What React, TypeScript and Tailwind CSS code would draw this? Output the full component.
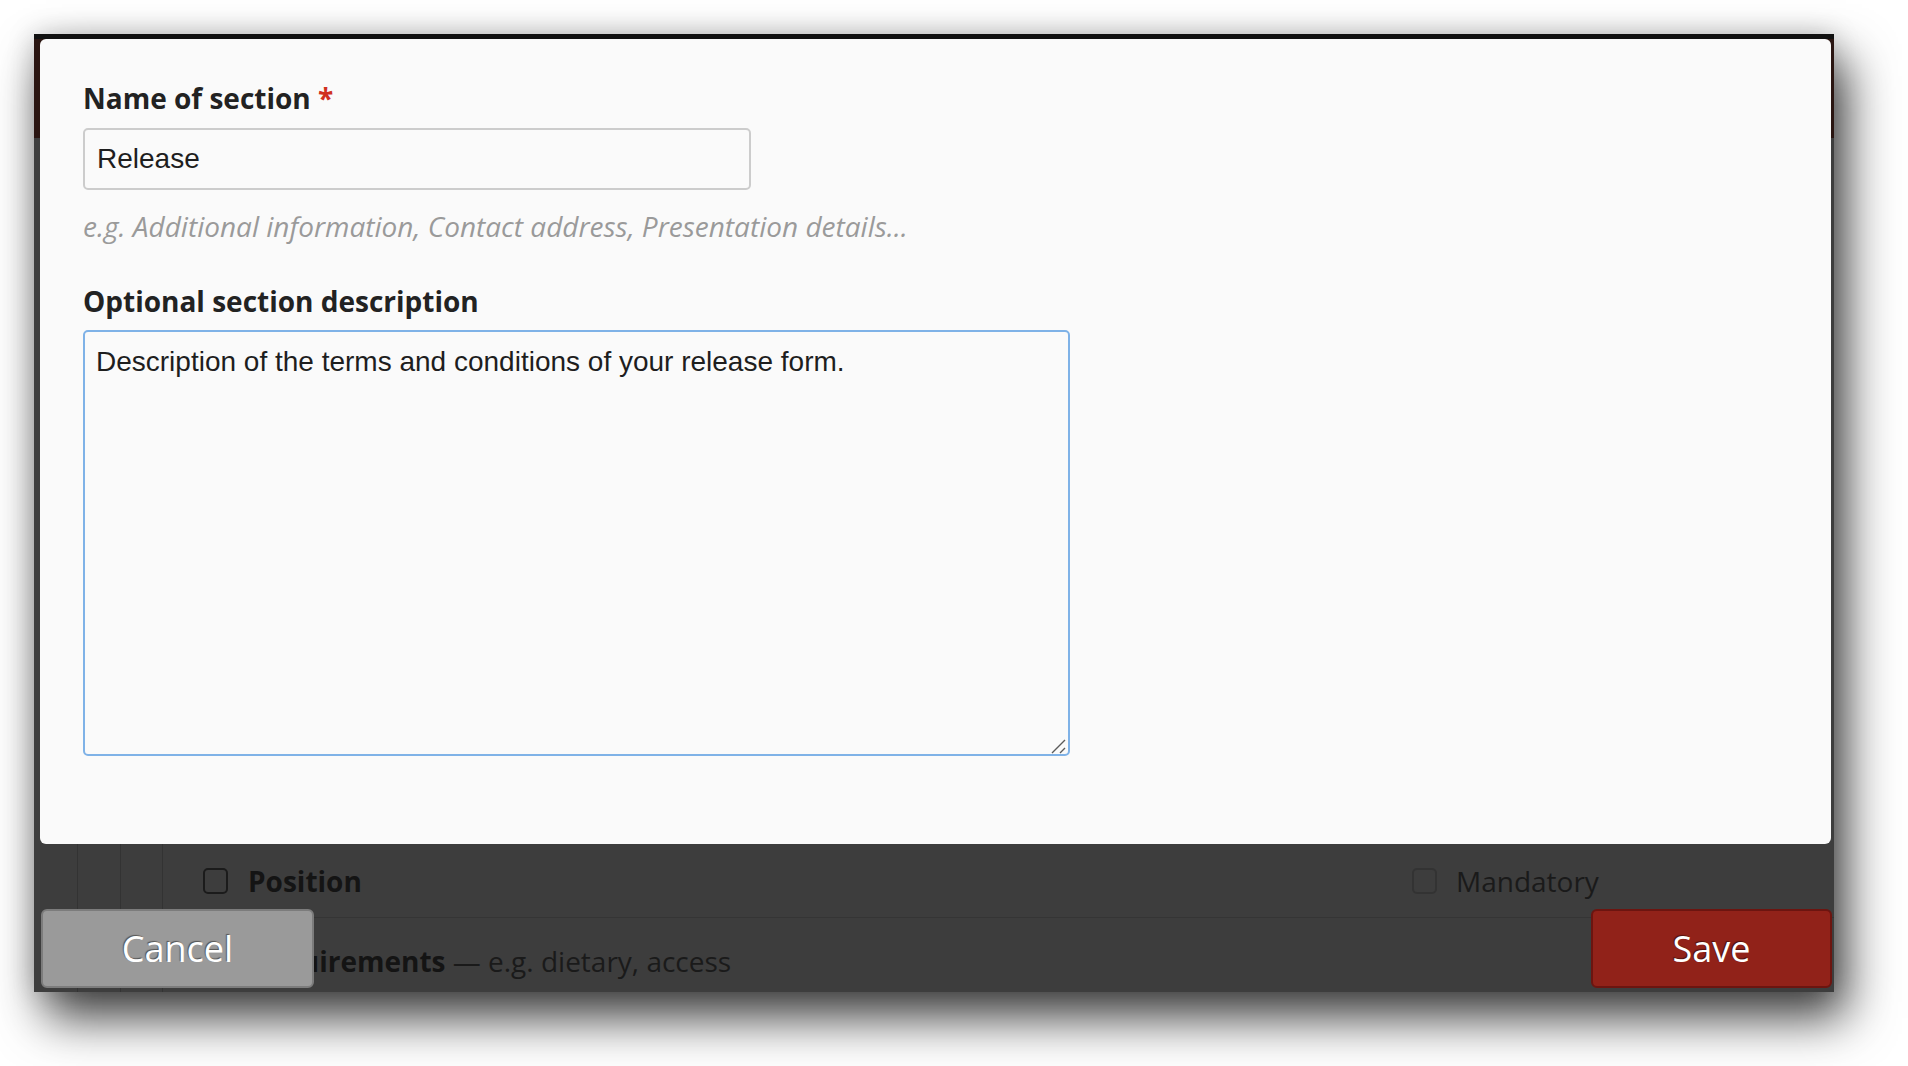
import React from 'react'

const openSans = "font-['Open_Sans',sans-serif]"

function Checkbox({ faint = false }: { faint?: boolean }) {
  return (
    <span
      className={`inline-block h-[26px] w-[25px] rounded-[5px] border-2 ${
        faint ? 'border-[#333333]' : 'border-[#1b1b1b]'
      } bg-[#3d3d3d]`}
    />
  )
}

export default function App() {
  return (
    <div className="h-[1066px] w-[1908px] overflow-hidden bg-white p-[34px]">
      {/* Window */}
      <div className="relative flex h-[958px] w-[1800px] flex-col overflow-hidden shadow-[12px_26px_46px_rgba(0,0,0,0.75),0_0_26px_rgba(0,0,0,0.18)]">
        {/* Dimmed header */}
        <div className="h-[104px] border-t-[5px] border-[#111111] bg-[#2a1511]" />

        {/* Dimmed table behind the dialog */}
        <div className={`flex flex-1 bg-[#3d3d3d] ${openSans}`}>
          <div className="w-[44px] border-r border-[#333333]" />
          <div className="w-[43px] border-r border-[#333333]" />
          <div className="w-[42px] border-r border-[#333333]" />
          <div className="flex flex-1 flex-col justify-end">
            <div className="flex h-[76px] items-center border-b border-[#353535] pl-[40px] pt-[2px]">
              <div className="flex w-[1209px] items-center gap-[20px]">
                <Checkbox />
                <span className="text-[28px] font-bold leading-[38px] text-[#141414]">Position</span>
              </div>
              <div className="flex items-center gap-[19px]">
                <Checkbox faint />
                <span className="text-[28px] leading-[38px] text-[#1a1a1a]">Mandatory</span>
              </div>
            </div>
            <div className="flex h-[74px] items-start pl-[40px] pt-[24px]">
              <div className="flex items-center gap-[20px]">
                <Checkbox />
                <span className="text-[28px] leading-[38px] text-[#1a1a1a]">
                  <span className="font-bold text-[#141414]">Requirements</span> — e.g. dietary, access
                </span>
              </div>
            </div>
          </div>
        </div>

        {/* Dialog */}
        <div className="absolute left-[6px] top-[5px] flex h-[805px] w-[1791px] flex-col items-start rounded-[6px] bg-[#fafafa] pl-[43px] pt-[40px]">
          <label className={`${openSans} text-[28px] font-bold leading-[38px] text-[#222222]`}>
            Name of section <span className="text-[#d0301e]">*</span>
          </label>
          <input
            readOnly
            value="Release"
            className="mt-[11px] h-[62px] w-[668px] rounded-[5px] border-2 border-[#cccccc] bg-[#fafafa] px-[12px] font-['Liberation_Sans',sans-serif] text-[28px] text-[#1e1e1e] outline-none"
          />
          <p className={`${openSans} mt-[17px] text-[28px] italic leading-[38px] text-[#9a9a9a]`}>
            e.g. Additional information, Contact address, Presentation details...
          </p>
          <label className={`${openSans} mt-[37px] text-[28px] font-bold leading-[38px] text-[#222222]`}>
            Optional section description
          </label>
          <div className="relative mt-[10px]">
            <textarea
              readOnly
              value="Description of the terms and conditions of your release form."
              className="block h-[426px] w-[987px] resize-none rounded-[5px] border-2 border-[#7fb2e7] bg-[#fafafa] px-[11px] pt-[10px] font-['Liberation_Sans',sans-serif] text-[28px] leading-[40px] text-[#1e1e1e] outline-none"
            />
            {/* resize grip */}
            <svg className="absolute bottom-[2px] right-[3px] h-[16px] w-[16px]" viewBox="0 0 16 16">
              <path d="M1 15 L14 2 M9 15 L14 10" stroke="#5a5a5a" strokeWidth="1.4" fill="none" />
            </svg>
          </div>
        </div>

        {/* Dialog buttons */}
        <div className={`absolute left-[7px] right-[2px] top-[875px] flex justify-between ${openSans}`}>
          <button className="h-[79px] w-[273px] rounded-[6px] border-2 border-[#7c7c7c] bg-[#9a9a9a] text-[36px] text-white [text-shadow:-1px_-1px_1px_rgba(0,0,0,0.45)]">
            Cancel
          </button>
          <button className="h-[79px] w-[241px] rounded-[6px] border-2 border-[#6c1510] bg-[#912219] text-[36px] text-white [text-shadow:-1px_-1px_1px_rgba(0,0,0,0.45)]">
            Save
          </button>
        </div>
      </div>
    </div>
  )
}
